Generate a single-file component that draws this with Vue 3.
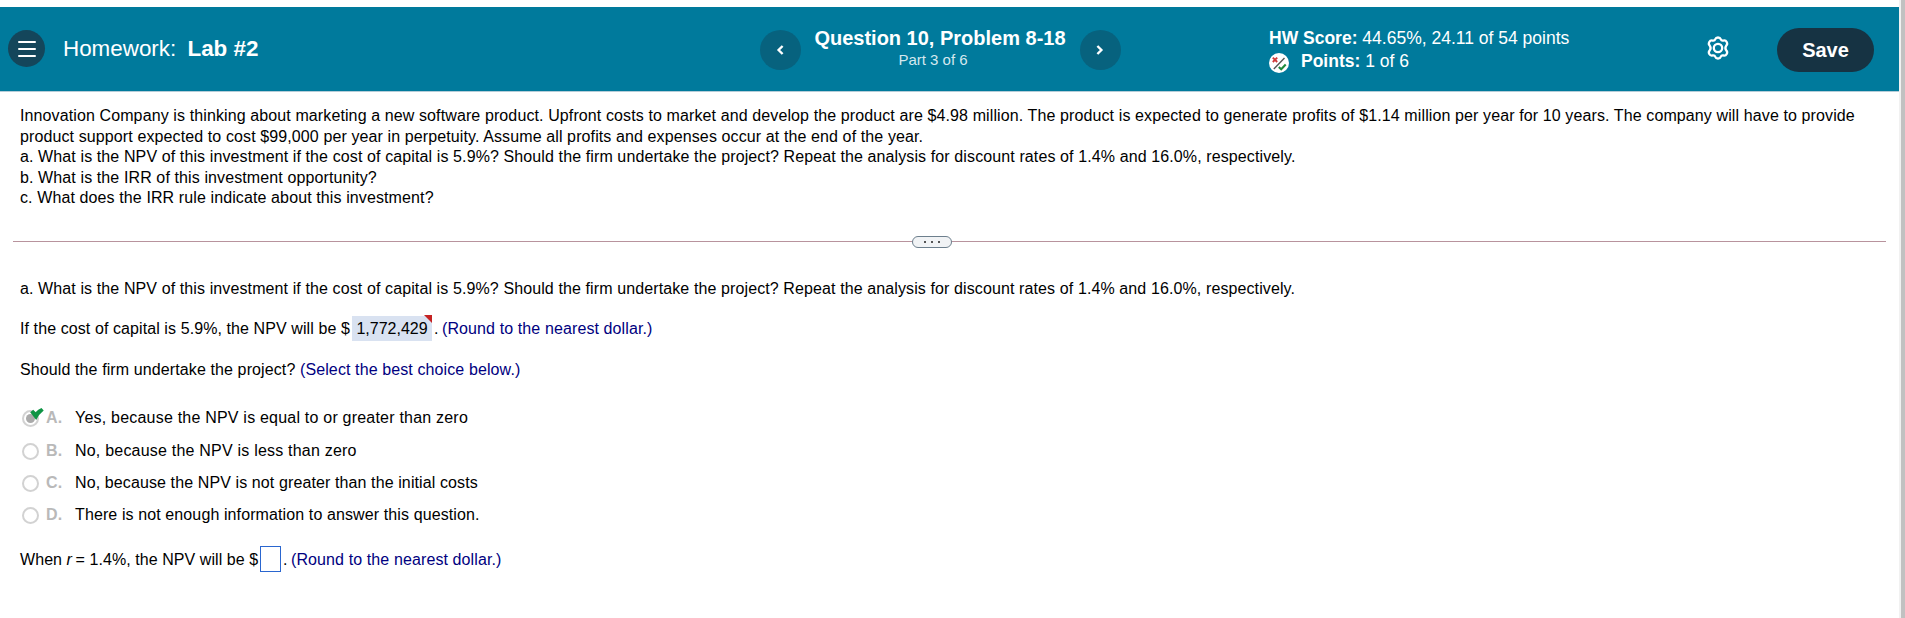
<script setup>
const intro = [
  { text: 'Innovation Company is thinking about marketing a new software product. Upfront costs to market and develop the product are $4.98 million. The product is expected to generate profits of $1.14 million per year for 10 years. The company will have to provide', cls: 'l1' },
  { text: 'product support expected to cost $99,000 per year in perpetuity. Assume all profits and expenses occur at the end of the year.', cls: 'l2' },
  { text: 'a. What is the NPV of this investment if the cost of capital is 5.9%? Should the firm undertake the project? Repeat the analysis for discount rates of 1.4% and 16.0%, respectively.', cls: 'l3' },
  { text: 'b. What is the IRR of this investment opportunity?', cls: 'l4' },
  { text: 'c. What does the IRR rule indicate about this investment?', cls: 'l5' },
]
const choices = [
  { key: 'A', text: 'Yes, because the NPV is equal to or greater than zero', picked: true },
  { key: 'B', text: 'No, because the NPV is less than zero' },
  { key: 'C', text: 'No, because the NPV is not greater than the initial costs' },
  { key: 'D', text: 'There is not enough information to answer this question.' },
]
</script>

<template>
  <div class="page">
    <div class="main">
      <header class="bar">
        <button class="menu" aria-label="Menu"><i></i><i></i><i></i></button>
        <div class="title">Homework: <b>Lab #2</b></div>
        <nav class="nav">
          <button class="step" aria-label="Previous">
            <svg width="12" height="12" viewBox="0 0 12 12"><path d="M7.600 2 3.600 6l4 4" /></svg>
          </button>
          <div class="question"><strong>Question 10, Problem 8-18</strong><span>Part 3 of 6</span></div>
          <button class="step" aria-label="Next">
            <svg width="12" height="12" viewBox="0 0 12 12"><path d="m3.400 2 4 4-4 4" /></svg>
          </button>
        </nav>
        <div class="score">
          <div><b>HW Score:</b> 44.65%, 24.11 of 54 points</div>
          <div class="points">
            <svg width="20" height="20" viewBox="0 0 20 20">
              <circle cx="10" cy="10" r="10" fill="#fff" />
              <path d="M3.800 4.600l4.400 4.400M8.200 4.600l-4.400 4.400" stroke="#cf3b3b" stroke-width="1.900" />
              <path d="M4.800 16 15.500 5" stroke="#555" stroke-width="1.400" />
              <path d="m9.800 14 2.400 2.200 4.500-4.700" stroke="#1f8a3c" stroke-width="2.100" fill="none" />
            </svg>
            <span><b>Points:</b> 1 of 6</span>
          </div>
        </div>
        <svg class="gear" width="24" height="24" viewBox="0 0 24 24">
          <path d="M9.300 3.200Q9.800 1.500 12 1.500T14.700 3.200Q15.400 5 17.300 4.600Q19.600 4 20.700 6Q21.800 8.100 20.400 9.400Q18.400 12 20.400 14.600Q21.800 15.900 20.700 18Q19.600 20 17.300 19.400Q15.400 19 14.700 20.800Q14.200 22.500 12 22.500T9.300 20.800Q8.600 19 6.700 19.400Q4.400 20 3.300 18Q2.200 15.900 3.600 14.600Q5.600 12 3.600 9.400Q2.200 8.100 3.300 6Q4.400 4 6.700 4.600Q8.600 5 9.300 3.200Z" />
          <circle cx="12" cy="12" r="4.200" />
        </svg>
        <button class="save">Save</button>
      </header>

      <section class="intro">
        <div v-for="l in intro" :key="l.cls" :class="l.cls">{{ l.text }}</div>
      </section>

      <div class="split"><span class="grip"><i></i><i></i><i></i></span></div>

      <section class="work">
        <p class="ask">{{ intro[2].text }}</p>
        <p class="npv"><span class="lead">If the cost of capital is 5.9%, the NPV will be $</span><span class="answer">1,772,429</span><span class="dot">.</span><span class="hint">(Round to the nearest dollar.)</span></p>
        <p class="should">Should the firm undertake the project? <span class="hint">(Select the best choice below.)</span></p>
        <ul class="choices">
          <li v-for="c in choices" :key="c.key" :class="'c' + c.key">
            <span class="radio" :class="{ picked: c.picked }">
              <svg v-if="c.picked" width="14" height="12" viewBox="0 0 14 12"><path d="M.2 4.200 3.200 1.800 5.600 4.200Q8 1.300 11.500 0L13.700 2.500Q9 6 6.200 12Z" /></svg>
            </span>
            <b>{{ c.key }}.</b><span>{{ c.text }}</span>
          </li>
        </ul>
        <p class="when"><span class="lead2">When <em>r</em> = 1.4%, the NPV will be $</span><span class="blank"></span><span class="dot">.</span><span class="hint">(Round to the nearest dollar.)</span></p>
      </section>
    </div>
    <div class="track"></div>
  </div>
</template>

<style>
body { margin: 0; background: #fff; }
</style>

<style scoped>
* { box-sizing: border-box; }
.page { display: flex; width: 1905px; height: 618px; overflow: hidden; font: 16px/20px "Liberation Sans", Arial, sans-serif; color: #000; white-space: nowrap; }
.main { width: 1899px; padding-top: 7px; }
.track { width: 6px; border-left: 2px solid #f1f1f1; background: #c1c1c1; }
button { border: 0; padding: 0; font: inherit; color: #fff; display: flex; align-items: center; justify-content: center; }
.bar { height: 85px; background: #007a9c; border-bottom: 1px solid #b5cdd8; display: flex; align-items: flex-start; color: #fff; }
.menu { width: 37px; height: 37px; border-radius: 50%; margin: 23px 0 0 8px; background: #14465b; flex-direction: column; gap: 5px; }
.menu i { width: 18px; height: 2px; background: #fff; border-radius: 1px; }
.title { width: 697px; margin: 29px 0 0 18px; font-size: 22.4px; line-height: 26px; }
.title b { margin-left: 5px; }
.nav { display: flex; width: 361px; justify-content: space-between; }
.step { width: 41px; height: 40px; margin-top: 23px; border-radius: 50%; background: #07627e; }
.step path { fill: none; stroke: #fff; stroke-width: 2.4; }
.question { display: flex; flex-direction: column; align-items: center; margin-top: 20px; }
.question strong { font-size: 20px; line-height: 22px; margin-left: -1px; }
.question span { font-size: 15px; line-height: 22px; color: #d5e8ef; margin-right: 15px; }
.score { width: 419px; margin: 20px 0 0 148px; font-size: 17.5px; line-height: 22px; }
.points { display: flex; gap: 12px; margin-top: 1px; }
.points svg { margin-top: 3px; }
.gear { margin: 29px 0 0 18px; fill: none; stroke: #fff; stroke-width: 2.3; }
.save { width: 97px; height: 44px; border-radius: 22px; background: #163343; font-size: 20px; font-weight: bold; margin: 21px 0 0 47px; padding-bottom: 1px; }
.intro { padding: 14px 0 0 20px; height: 149px; letter-spacing: .111px; }
.l1, .l3 { height: 21px; }
.l2, .l4 { height: 20px; }
.split { margin: 0 13px; height: 1px; background: #b8939d; display: flex; align-items: center; }
.grip { width: 40px; height: 12px; flex: none; margin-left: 899px; border: 1px solid #6d7f8d; border-radius: 6px; background: #f1f3f5; display: flex; gap: 5px; justify-content: center; align-items: center; }
.grip i { width: 2px; height: 2px; background: #555; }
.work { padding: 37px 0 0 20px; letter-spacing: .109px; }
p { margin: 0; display: flex; height: 20px; }
.npv { margin-top: 20px; }
.lead { width: 330px; letter-spacing: .09px; }
.answer { position: relative; background: #d9e2f1; height: 25px; width: 80px; margin: -3px 0 0 2px; line-height: 26px; text-align: center; letter-spacing: 0; }
.answer::after { content: ""; position: absolute; right: 0; top: -1px; border-top: 8px solid #c52222; border-left: 8px solid transparent; }
.dot { width: 10px; padding-left: 2px; }
.hint { color: #000080; }
.should { margin-top: 21px; white-space: pre; }
.choices { list-style: none; padding: 0; margin: 28px 0 0; }
li { display: flex; height: 32.2px; }
li.cA { height: 33px; }
li.cB { height: 32px; }
.cA, .cB { letter-spacing: .21px; }
li.cD { height: 31.600px; }
.radio { position: relative; width: 17px; height: 17px; margin: 2px 7px 0 2px; border: 2px solid #d2d2d2; border-radius: 50%; }
.picked::before { content: ""; position: absolute; inset: 2px; border-radius: 50%; background: #aaa; }
.picked svg { position: absolute; left: 6px; top: -4px; fill: #0e9444; }
li b { width: 29px; color: #b9b9b9; letter-spacing: .2px; }
.when { margin-top: 13px; }
.lead2 { width: 238px; letter-spacing: .07px; }
em { margin-right: -1px; }
.blank { width: 21px; height: 26px; border: 1px solid #2a66cf; margin: -4px 0 0 2px; }
</style>
